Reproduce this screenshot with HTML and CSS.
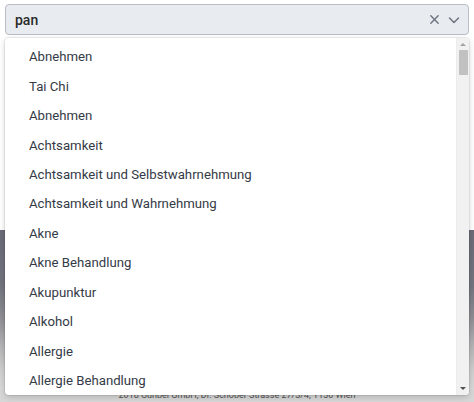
FILE: index.html
```html
<!DOCTYPE html>
<html lang="de">
<head>
<meta charset="utf-8">
<title>Suche</title>
<link rel="stylesheet" href="styles.css">
</head>
<body>
<div class="page">
  <div class="select">
    <div class="control">
      <span class="value">pan</span>
      <span class="indicators">
        <svg class="icon clear" viewBox="0 0 12 12" width="12" height="12"><path d="M2 2 L10 10 M10 2 L2 10" stroke="currentColor" stroke-width="1.6" fill="none" stroke-linecap="round"/></svg>
        <svg class="icon chevron" viewBox="0 0 12 12" width="12" height="12"><path d="M1.5 4 L6 8.5 L10.5 4" stroke="currentColor" stroke-width="1.5" fill="none" stroke-linecap="round" stroke-linejoin="round"/></svg>
      </span>
    </div>
  </div>
  <div class="spacer"></div>
  <div class="hero"></div>
  <footer class="footer">2018 Gunbel GmbH, Dr. Schober Strasse 27/3/4, 1130 Wien</footer>

  <div class="menu">
    <ul class="options">
      <li class="option">Abnehmen</li>
      <li class="option">Tai Chi</li>
      <li class="option">Abnehmen</li>
      <li class="option">Achtsamkeit</li>
      <li class="option">Achtsamkeit und Selbstwahrnehmung</li>
      <li class="option">Achtsamkeit und Wahrnehmung</li>
      <li class="option">Akne</li>
      <li class="option">Akne Behandlung</li>
      <li class="option">Akupunktur</li>
      <li class="option">Alkohol</li>
      <li class="option">Allergie</li>
      <li class="option">Allergie Behandlung</li>
    </ul>
    <div class="scrollbar">
      <span class="arrow up"></span>
      <span class="thumb"></span>
      <span class="track"></span>
      <span class="arrow down"></span>
    </div>
  </div>
</div>
</body>
</html>
```

FILE: styles.css
```css
html, body {
  margin: 0;
  padding: 0;
  background: #ffffff;
}
body {
  font-family: Roboto, "Noto Sans", "Liberation Sans", sans-serif;
  color: #333;
  width: 474px;
  height: 402px;
  overflow: hidden;
}
.page {
  position: relative;
  width: 474px;
  height: 402px;
  display: flex;
  flex-direction: column;
}
.select {
  padding: 4px 5px 0 5px;
}
.control {
  height: 31px;
  box-sizing: border-box;
  border: 1px solid #b9bcc2;
  border-radius: 4px;
  background: #e8ebf0;
  display: flex;
  align-items: center;
  padding: 0 8px 0 9px;
}
.value {
  flex: 1;
  font-size: 14px;
  font-weight: 500;
  color: #2b2b2b;
}
.indicators {
  display: flex;
  align-items: center;
  gap: 8px;
  color: #6f7580;
}
.icon.clear { width: 11px; height: 11px; }
.icon.chevron { width: 12px; height: 12px; }
.spacer {
  height: 195px;
}
.hero {
  height: 160px;
  background: linear-gradient(180deg, #6b6b78 0%, #74747f 35%, #8e8e94 55%, #b4b4b6 72%, #cfcfcf 88%, #dadada 100%);
}
.footer {
  flex: 1;
  background: #d7d7d7;
  font-size: 9px;
  color: #555;
  text-align: center;
  line-height: 11px;
}
.menu {
  position: absolute;
  top: 38px;
  left: 5px;
  width: 464px;
  height: 357px;
  background: #fff;
  border-radius: 4px;
  box-shadow: 0 0 0 1px rgba(0,0,0,0.06), 0 2px 6px rgba(0,0,0,0.18);
  display: flex;
  overflow: hidden;
}
.options {
  flex: 1;
  list-style: none;
  margin: 0;
  padding: 4px 0 0 0;
  overflow: hidden;
}
.option {
  height: 29.45px;
  display: flex;
  align-items: center;
  padding-left: 24px;
  font-size: 13.2px;
  color: #343a46;
}
.scrollbar {
  width: 12px;
  background: #f1f1f1;
  display: flex;
  flex-direction: column;
  align-items: center;
  border-left: 1px solid #ececec;
}
.arrow {
  width: 0;
  height: 0;
  border-left: 3px solid transparent;
  border-right: 3px solid transparent;
  margin: 5px 0 4px;
}
.arrow.up { border-bottom: 3px solid #a3a3a3; }
.arrow.down { border-top: 3px solid #505050; margin: 4px 0 5px; }
.thumb {
  width: 9px;
  height: 25px;
  border-radius: 1px;
  background: #c1c1c1;
}
.track { flex: 1; }
```
